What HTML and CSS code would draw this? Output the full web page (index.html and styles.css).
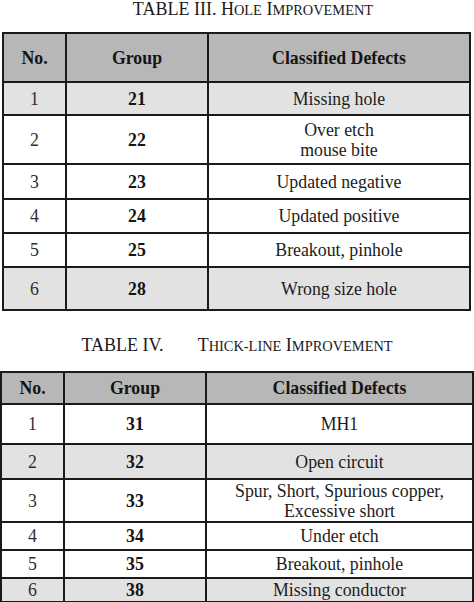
FILE: index.html
```html
<!DOCTYPE html>
<html>
<head>
<meta charset="utf-8">
<link rel="stylesheet" href="styles.css">
</head>
<body>
<div class="page">
  <p class="caption caption-hole">TABLE III. H<span class="sc">ole</span> I<span class="sc">mprovement</span></p>
  <div class="grid grid-hole">
    <div class="row head h-49"><div class="cell">No.</div><div class="cell">Group</div><div class="cell">Classified Defects</div></div>
    <div class="row shade h-33"><div class="cell num">1</div><div class="cell grp">21</div><div class="cell">Missing hole</div></div>
    <div class="row h-49"><div class="cell num">2</div><div class="cell grp">22</div><div class="cell">Over etch<br>mouse bite</div></div>
    <div class="row h-35"><div class="cell num">3</div><div class="cell grp">23</div><div class="cell">Updated negative</div></div>
    <div class="row h-34"><div class="cell num">4</div><div class="cell grp">24</div><div class="cell">Updated positive</div></div>
    <div class="row h-34"><div class="cell num">5</div><div class="cell grp">25</div><div class="cell">Breakout, pinhole</div></div>
    <div class="row shade h-41 last"><div class="cell num">6</div><div class="cell grp">28</div><div class="cell">Wrong size hole</div></div>
  </div>

  <p class="caption caption-thick"><span class="tab">TABLE IV.</span>T<span class="sc">hick-line</span> I<span class="sc">mprovement</span></p>
  <div class="grid grid-thick">
    <div class="row head h-32"><div class="cell">No.</div><div class="cell">Group</div><div class="cell">Classified Defects</div></div>
    <div class="row h-40"><div class="cell num">1</div><div class="cell grp">31</div><div class="cell">MH1</div></div>
    <div class="row shade h-35"><div class="cell num">2</div><div class="cell grp">32</div><div class="cell">Open circuit</div></div>
    <div class="row h-43"><div class="cell num">3</div><div class="cell grp">33</div><div class="cell">Spur, Short, Spurious copper,<br>Excessive short</div></div>
    <div class="row h-28"><div class="cell num">4</div><div class="cell grp">34</div><div class="cell">Under etch</div></div>
    <div class="row h-28"><div class="cell num">5</div><div class="cell grp">35</div><div class="cell">Breakout, pinhole</div></div>
    <div class="row shade h-22 last"><div class="cell num">6</div><div class="cell grp">38</div><div class="cell">Missing conductor</div></div>
  </div>
</div>
</body>
</html>
```

FILE: styles.css
```css
html, body {
  margin: 0;
  padding: 0;
  background: #ffffff;
}

.page {
  width: 474px;
  font-family: "Liberation Serif", "Times New Roman", serif;
  color: #1c1c1c;
}

.caption {
  margin: 0;
  font-size: 18px;
  line-height: 18px;
  text-align: center;
  color: #1a1a1a;
}

.caption .sc {
  text-transform: uppercase;
  font-size: 0.8em;
}

.caption-hole {
  padding-left: 32px;
}

.caption-thick {
  margin-top: 25px;
}

.caption .tab {
  margin-right: 34px;
}

.grid {
  box-sizing: border-box;
  border: 2px solid #1a1a1a;
  font-size: 17.8px;
  line-height: 20px;
  color: #1c1c1c;
}

.grid-hole {
  margin: 13px 0 0 2px;
  width: 469px;
}

.grid-thick {
  margin: 16px 0 0 0;
  width: 474px;
}

.row {
  box-sizing: border-box;
  display: grid;
  grid-template-columns: 63px 142px 1fr;
  border-bottom: 2px solid #1a1a1a;
}

.row.last {
  border-bottom: 0;
}

.cell {
  box-sizing: border-box;
  display: flex;
  align-items: center;
  justify-content: center;
  text-align: center;
  border-right: 2px solid #1a1a1a;
}

.cell:last-child {
  border-right: 0;
}

.head {
  background: #b7b7b7;
  font-weight: bold;
  color: #151515;
}

.shade {
  background: #e2e2e2;
}

.num {
  color: #2e2e2e;
}

.grp {
  font-weight: bold;
  color: #151515;
}

.h-22 { height: 22px; }
.h-28 { height: 28px; }
.h-32 { height: 32px; }
.h-33 { height: 33px; }
.h-34 { height: 34px; }
.h-35 { height: 35px; }
.h-40 { height: 40px; }
.h-41 { height: 41px; }
.h-43 { height: 43px; }
.h-49 { height: 49px; }
```
